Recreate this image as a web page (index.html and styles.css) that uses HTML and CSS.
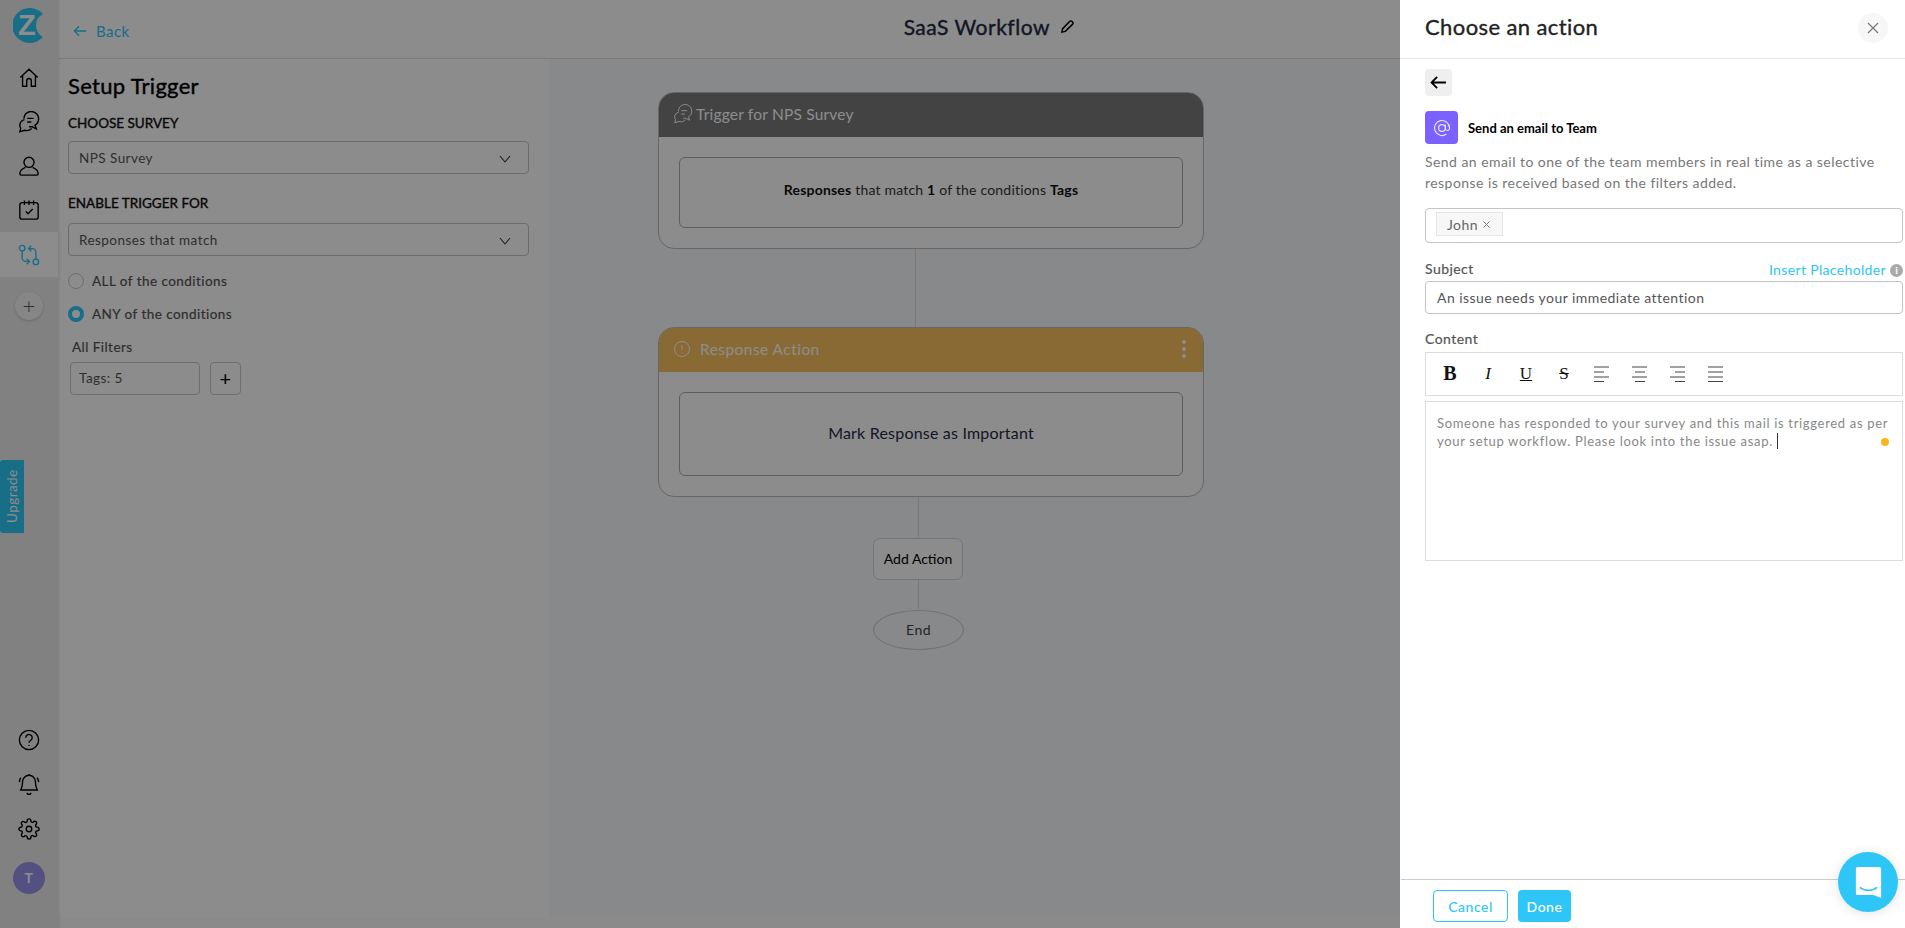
FILE: index.html
```html
<!DOCTYPE html>
<html lang="en">
<head>
  <meta charset="UTF-8">
  <title>SaaS Workflow</title>
  <link rel="stylesheet" href="styles.css">
</head>
<body>
  <div class="app">
    <nav class="sidebar">
      <svg class="logo" viewBox="0 0 32 35" width="32" height="35">
        <path d="M30 6A17.500 17.500 0 1 0 30 29 A13 13 0 0 1 30 6Z" fill="#2dc6f6"/>
        <text x="5" y="27" class="logo-z">Z</text>
      </svg>
      <a class="nav-item"><svg viewBox="0 0 24 24" class="ico"><path d="M2.500 11.500 12 2.500l9.500 9M5 9.500V21h4.500v-6a2.500 2.500 0 0 1 5 0v6H19V9.500"/></svg></a>
      <a class="nav-item"><svg viewBox="0 0 24 24" class="ico"><path d="M6.500 8.500a8 8 0 1 1 12 7l1.500 4-5-2.500a8 8 0 0 1-3 0"/><path d="M10 8h7M10 12h4.500"/><path d="M7 9.500C4 10.500 2 13 2 15.500c0 1.500.5 2.500 1 3.500L2 22.500l5-1.500c3 1 6 0 8-2"/></svg></a>
      <a class="nav-item"><svg viewBox="0 0 24 24" class="ico"><circle cx="12" cy="8" r="5.500"/><path d="M8 13.500C4.500 15 2 18 2 20.500c0 1 .5 1.500 1.500 1.500h17c1 0 1.500-.5 1.500-1.500 0-2.500-2.500-5.500-6-7"/></svg></a>
      <a class="nav-item"><svg viewBox="0 0 24 24" class="ico"><rect x="2" y="4" width="20" height="18" rx="2.500"/><path d="M7 1.500v5M12 1.500v5M17 1.500v5M8.500 13.500l2.500 2.500 5-5"/></svg></a>
      <a class="nav-item active"><svg viewBox="0 0 24 24" class="ico"><circle cx="4.500" cy="4.500" r="3"/><circle cx="19.500" cy="19.500" r="3"/><path d="M4.500 7.500V15a4 4 0 0 0 4 4h3.500M9.500 16l3 3-3 3"/><path d="M19.500 16.500V9a4 4 0 0 0-4-4H12M14.500 2l-3 3 3 3"/></svg></a>
      <button class="nav-add">+</button>
      <div class="nav-bottom">
        <a class="nav-item small"><svg viewBox="0 0 24 24" class="ico"><circle cx="12" cy="12" r="10.500"/><path d="M8.500 9.500a3.500 3.500 0 1 1 5.500 2.800c-1.300.9-2 1.400-2 2.700M12 17.500v1"/></svg></a>
        <a class="nav-item small"><svg viewBox="0 0 24 24" class="ico"><path d="M12 2.500a7 7 0 0 0-7 7c0 5-1 7-2 9h18c-1-2-2-4-2-9a7 7 0 0 0-7-7zM10 21.500a2 2 0 0 0 4 0M12 1v1.500M3 5a12 12 0 0 0-1.500 5M21 5a12 12 0 0 1 1.500 5"/></svg></a>
        <a class="nav-item small"><svg viewBox="0 0 24 24" class="ico"><path d="M12 15a3 3 0 1 0 0-6 3 3 0 0 0 0 6z"/><path d="M19.400 15a1.650 1.650 0 0 0 .33 1.820l.06.06a2 2 0 0 1 0 2.830 2 2 0 0 1-2.830 0l-.06-.06a1.650 1.650 0 0 0-1.820-.33 1.650 1.650 0 0 0-1 1.510V21a2 2 0 0 1-2 2 2 2 0 0 1-2-2v-.09A1.650 1.650 0 0 0 9 19.400a1.650 1.650 0 0 0-1.820.33l-.06.06a2 2 0 0 1-2.830 0 2 2 0 0 1 0-2.830l.06-.06a1.650 1.650 0 0 0 .33-1.820 1.650 1.650 0 0 0-1.510-1H3a2 2 0 0 1-2-2 2 2 0 0 1 2-2h.09A1.650 1.650 0 0 0 4.600 9a1.650 1.650 0 0 0-.33-1.820l-.06-.06a2 2 0 0 1 0-2.830 2 2 0 0 1 2.830 0l.06.06a1.650 1.650 0 0 0 1.820.33H9a1.650 1.650 0 0 0 1-1.510V3a2 2 0 0 1 2-2 2 2 0 0 1 2 2v.09a1.650 1.650 0 0 0 1 1.510 1.650 1.650 0 0 0 1.820-.33l.06-.06a2 2 0 0 1 2.830 0 2 2 0 0 1 0 2.830l-.06.06a1.650 1.650 0 0 0-.33 1.820V9a1.650 1.650 0 0 0 1.510 1H21a2 2 0 0 1 2 2 2 2 0 0 1-2 2h-.09a1.650 1.650 0 0 0-1.510 1z"/></svg></a>
        <div class="avatar">T</div>
      </div>
    </nav>
    <a class="upgrade">Upgrade</a>

    <div class="main">
      <header class="topbar">
        <a class="back-link"><svg viewBox="0 0 16 16" width="14" height="14"><path d="M15 8H1.500M7 2.500 1.500 8 7 13.500"/></svg>Back</a>
        <div class="wf-title">SaaS Workflow
          <svg viewBox="0 0 16 16" width="15" height="15"><path d="M2 14l.8-3.700L10.500 2.500a1.500 1.500 0 0 1 2.200 0l.8.800a1.500 1.500 0 0 1 0 2.200L5.700 13.200z"/></svg>
        </div>
      </header>
      <div class="content">
        <aside class="panel">
          <h2>Setup Trigger</h2>
          <div class="field-label">CHOOSE SURVEY</div>
          <div class="select">NPS Survey<svg viewBox="0 0 12 8" width="12" height="8"><path d="M1 1l5 6 5-6"/></svg></div>
          <div class="field-label second">ENABLE TRIGGER FOR</div>
          <div class="select lower">Responses that match<svg viewBox="0 0 12 8" width="12" height="8"><path d="M1 1l5 6 5-6"/></svg></div>
          <div class="radio-row first"><span class="radio"></span>ALL of the conditions</div>
          <div class="radio-row"><span class="radio on"></span>ANY of the conditions</div>
          <div class="filters-label">All Filters</div>
          <div class="filters">
            <div class="filter-box">Tags: 5</div>
            <div class="filter-add">+</div>
          </div>
        </aside>
        <section class="canvas">
          <div class="card">
            <div class="card-head dark">
              <svg viewBox="0 0 24 24" class="head-ico"><path d="M6.500 8.500a8 8 0 1 1 12 7l1.500 4-5-2.500a8 8 0 0 1-3 0"/><path d="M10 8h7M10 12h4.500"/><path d="M7 9.500C4 10.500 2 13 2 15.500c0 1.500.5 2.500 1 3.500L2 22.500l5-1.500c3 1 6 0 8-2"/></svg>
              Trigger for NPS Survey
            </div>
            <div class="card-inner short"><p><b>Responses</b> that match <b>1</b> of the conditions <b>Tags</b></p></div>
          </div>
          <div class="line tall"></div>
          <div class="card">
            <div class="card-head amber">
              <svg viewBox="0 0 24 24" class="head-ico"><circle cx="12" cy="12" r="10"/><path d="M12 6.500v7M12 16.500v1"/></svg>
              Response Action
              <span class="dots"><i></i><i></i><i></i></span>
            </div>
            <div class="card-inner big">Mark Response as Important</div>
          </div>
          <div class="line mid"></div>
          <div class="add-action">Add Action</div>
          <div class="line low"></div>
          <div class="end">End</div>
        </section>
      </div>
    </div>
  </div>

  <div class="overlay"></div>

  <aside class="drawer">
    <div class="drawer-head">
      <h3>Choose an action</h3>
      <button class="close"><svg viewBox="0 0 12 12" width="12" height="12"><path d="M1 1l10 10M11 1 1 11"/></svg></button>
    </div>
    <div class="drawer-body">
      <button class="back-btn"><svg viewBox="0 0 18 14" width="17" height="13"><path d="M17 7H1.500M7.500 1 1.500 7l6 6"/></svg></button>
      <div class="action-title">
        <span class="action-ico"><svg viewBox="0 0 24 24" width="18" height="18"><circle cx="12" cy="12" r="4.500"/><path d="M16.500 7.500v6a3 3 0 0 0 5.500 0V12a10 10 0 1 0-4 8"/></svg></span>
        Send an email to Team
      </div>
      <p class="action-desc">Send an email to one of the team members in real time as a selective response is received based on the filters added.</p>
      <div class="tag-input"><span class="tag">John <svg viewBox="0 0 8 8" width="7" height="7"><path d="M.5.500l7 7M7.500.500l-7 7"/></svg></span></div>
      <div class="label-row">
        <label>Subject</label>
        <span class="placeholder-link">Insert Placeholder<span class="info">i</span></span>
      </div>
      <div class="text-input">An issue needs your immediate attention</div>
      <label class="content-label">Content</label>
      <div class="toolbar">
        <span class="tb tb-b">B</span>
        <span class="tb tb-i">I</span>
        <span class="tb tb-u">U</span>
        <span class="tb tb-s">S</span>
        <svg class="tb-align" viewBox="0 0 16 16" width="16" height="16"><path d="M0 1h15M0 6h10M0 11h15M0 15.500h10"/></svg>
        <svg class="tb-align" viewBox="0 0 16 16" width="16" height="16"><path d="M0 1h15M3 6h10M0 11h15M3 15.500h10"/></svg>
        <svg class="tb-align" viewBox="0 0 16 16" width="16" height="16"><path d="M0 1h15M5 6h10M0 11h15M5 15.500h10"/></svg>
        <svg class="tb-align" viewBox="0 0 16 16" width="16" height="16"><path d="M0 1h15M0 6h15M0 11h15M0 15.500h15"/></svg>
      </div>
      <div class="editor">
        Someone has responded to your survey and this mail is triggered as per your setup workflow. Please look into the issue asap. <span class="caret"></span>
        <span class="dot"></span>
      </div>
    </div>
    <div class="drawer-foot">
      <button class="btn-cancel">Cancel</button>
      <button class="btn-done">Done</button>
    </div>
  </aside>

  <div class="chat">
    <svg viewBox="0 0 28 34" width="29" height="33"><path d="M3 1h22a2 2 0 0 1 2 2v30l-8-3H3a2 2 0 0 1-2-2V3a2 2 0 0 1 2-2z" fill="#fff"/><path d="M5 22c5 4 13 4 18 0" fill="none" stroke="#2dc6f6" stroke-width="1.500"/></svg>
  </div>
</body>
</html>
```

FILE: styles.css
```css
* { box-sizing: border-box; }
html, body { height: 100%; }
body {
  margin: 0;
  overflow: hidden;
  font-family: Lato, "Liberation Sans", sans-serif;
  font-size: 14px;
  letter-spacing: .45px;
  color: #333;
  background: #fff;
}
svg path, svg circle, svg rect { vector-effect: non-scaling-stroke; }
.app { display: flex; height: 928px; }

/* sidebar */
.sidebar {
  width: 58px;
  flex: none;
  display: flex;
  flex-direction: column;
  align-items: center;
  padding-top: 8px;
  background: #ececec;
  box-shadow: 1px 0 3px rgba(0,0,0,.12);
  z-index: 1;
}
.logo { margin: 0 0 13px 0; }
.logo-z { font: 900 29px "Liberation Sans", sans-serif; fill: #fff; }
.nav-item {
  width: 100%;
  height: 44px;
  display: flex;
  align-items: center;
  justify-content: center;
  color: #000;
}
.nav-item.active { background: #fff; height: 45px; color: #2dc6f6; }
.nav-item.small { height: 44.500px; }
.ico { width: 22px; height: 22px; fill: none; stroke: currentColor; stroke-width: 1.400; }
.nav-add {
  width: 28px;
  height: 28px;
  margin-top: 15px;
  padding: 0;
  border: 0;
  border-radius: 50%;
  background: #f4f4f4;
  box-shadow: 0 1px 3px rgba(0,0,0,.2);
  color: #555;
  font: 300 22px/26px Lato, sans-serif;
}
.nav-bottom {
  margin-top: auto;
  width: 100%;
  padding-bottom: 34px;
  display: flex;
  flex-direction: column;
  align-items: center;
}
.avatar {
  width: 32px;
  height: 32px;
  margin-top: 11px;
  border-radius: 50%;
  background: #9a93ea;
  color: #fff;
  font-weight: 700;
  font-size: 14px;
  text-align: center;
  line-height: 32px;
}
.upgrade {
  position: absolute;
  left: 0;
  top: 460px;
  width: 24px;
  height: 73px;
  z-index: 2;
  display: flex;
  align-items: center;
  justify-content: center;
  border-radius: 0 3px 3px 0;
  background: #2dc6f6;
  color: #fff;
  font-size: 13.500px;
  writing-mode: vertical-rl;
  transform: rotate(180deg);
}

/* main */
.main { flex: 1; display: flex; flex-direction: column; min-width: 0; }
.topbar {
  height: 59px;
  flex: none;
  display: flex;
  align-items: center;
  padding-left: 15px;
  border-bottom: 1px solid #e2e2e2;
  background: #fff;
}
.back-link { display: flex; align-items: center; gap: 9px; color: #2dc6f6; font-size: 15px; margin-top: 4px; }
.back-link svg { fill: none; stroke: currentColor; stroke-width: 1.300; }
.wf-title {
  margin: -5px 0 0 774px;
  display: flex;
  align-items: center;
  gap: 10px;
  font-size: 21px;
  font-weight: 400;
  color: #1f2a44;
  letter-spacing: .5px;
  -webkit-text-stroke: .4px #1f2a44;
}
.wf-title svg { fill: none; stroke: #000; stroke-width: 1.500; }
.content { flex: 1; display: flex; min-height: 0; padding-bottom: 10px; background: #fbfbfb; }
.panel { width: 491px; flex: none; padding: 0 20px 0 10px; background: #fff; }
.panel h2 { margin: 13px 0 0; font-size: 22px; line-height: 28px; font-weight: 400; color: #000; letter-spacing: .3px; -webkit-text-stroke: .4px #000; }
.field-label { margin-top: 14px; font-size: 13.500px; line-height: 18px; font-weight: 400; color: #111; letter-spacing: 0; -webkit-text-stroke: .4px #111; }
.field-label.second { margin-top: 20px; }
.select {
  height: 33px;
  margin-top: 9px;
  padding: 0 17px 0 10px;
  display: flex;
  align-items: center;
  justify-content: space-between;
  border: 1px solid #c4c4c4;
  border-radius: 4px;
  color: #555;
  font-size: 13.500px;
}
.select.lower { margin-top: 11px; }
.select svg { fill: none; stroke: #333; stroke-width: 1.100; margin-top: 3px; }
.radio-row { display: flex; align-items: center; gap: 8px; height: 33px; color: #555; font-size: 13.500px; -webkit-text-stroke: .2px #555; }
.radio-row.first { margin-top: 8px; }
.radio { width: 16px; height: 16px; border: 1px solid #c8c8c8; border-radius: 50%; background: #fff; }
.radio.on { border: 4px solid #2dc6f6; }
.filters-label { margin: 8px 0 0 4px; line-height: 18px; color: #555; font-size: 13.500px; -webkit-text-stroke: .2px #555; }
.filters { display: flex; gap: 10px; margin: 6px 0 0 2px; }
.filter-box {
  width: 130px;
  height: 33px;
  padding-left: 8px;
  line-height: 31px;
  border: 1px solid #c8c8c8;
  border-radius: 4px;
  color: #555;
  font-size: 13.500px;
}
.filter-add {
  width: 31px;
  height: 33px;
  border: 1px solid #c8c8c8;
  border-radius: 4px;
  color: #000;
  font-size: 20px;
  line-height: 31px;
  text-align: center;
}

.canvas {
  flex: 1;
  display: flex;
  flex-direction: column;
  align-items: flex-start;
  padding: 33px 0 0 109px;
  background: #f8f9fc;
}
.card {
  width: 546px;
  border: 1px solid #bbb;
  border-radius: 16px;
  background: #fff;
  overflow: hidden;
}
.card-head {
  height: 44px;
  display: flex;
  align-items: center;
  gap: 5px;
  padding: 0 0 3px 14px;
  font-size: 15.500px;
  color: #fff;
}
.card-head.dark { background: #7a7a7a; letter-spacing: .2px; gap: 3px; }
.card-head.dark .head-ico { width: 20px; height: 20px; }
.card-head.amber { background: #fbc160; gap: 9px; }
.head-ico { width: 18px; height: 18px; fill: none; stroke: currentColor; stroke-width: 1; }
.dots { margin-left: auto; margin-right: 17px; display: flex; flex-direction: column; gap: 3px; }
.dots i { width: 4px; height: 4px; border-radius: 50%; background: #fff; }
.card-inner {
  margin: 20px 20px 20px;
  border: 1px solid #aaa;
  border-radius: 6px;
  display: flex;
  justify-content: center;
  color: #333;
  letter-spacing: .2px;
}
.card-inner.short { height: 71px; padding-top: 23px; }
.card-inner.short p { margin: 0; }
.card-inner b { color: #111; font-weight: 700; }
.card-inner.big { height: 84px; margin-bottom: 20px; align-items: center; font-size: 16px; color: #1f2a44; padding-bottom: 3px; }
.line { width: 1px; background: #dcdcdc; }
.line.tall { height: 78px; margin-left: 257px; }
.line.mid { height: 41px; margin-left: 260px; }
.line.low { height: 30px; margin-left: 260px; }
.add-action {
  width: 90px;
  height: 42px;
  margin-left: 215px;
  border: 1px solid #d6d6d6;
  border-radius: 7px;
  background: #fff;
  color: #000;
  line-height: 40px;
  text-align: center;
  letter-spacing: 0;
}
.end {
  width: 91px;
  height: 40px;
  margin-left: 215px;
  border: 1px solid #cfcfcf;
  border-radius: 50%;
  color: #444;
  line-height: 38px;
  text-align: center;
}

.overlay { position: fixed; inset: 0; background: rgba(0,0,0,.45); z-index: 5; }

/* drawer */
.drawer {
  position: fixed;
  top: 0;
  right: 0;
  bottom: 0;
  width: 505px;
  z-index: 6;
  display: flex;
  flex-direction: column;
  background: #fff;
}
.drawer-head {
  height: 59px;
  flex: none;
  display: flex;
  align-items: center;
  justify-content: space-between;
  padding: 0 17px 0 25px;
  border-bottom: 1px solid #e6e6e6;
}
.drawer-head h3 { margin: -5px 0 0; font-size: 22px; font-weight: 400; color: #222; letter-spacing: .4px; -webkit-text-stroke: .35px #222; }
.close {
  width: 30px;
  height: 30px;
  margin-top: -2px;
  padding: 0;
  border: 0;
  border-radius: 50%;
  background: #f7f7f7;
  display: flex;
  align-items: center;
  justify-content: center;
}
.close svg { fill: none; stroke: #777; stroke-width: 1.200; }
.drawer-body { flex: 1; padding: 10px 2px 0 25px; }
.back-btn {
  width: 27px;
  height: 27px;
  padding: 0;
  border: 0;
  border-radius: 4px;
  background: #efefef;
  display: flex;
  align-items: center;
  justify-content: center;
}
.back-btn svg { fill: none; stroke: #000; stroke-width: 1.800; }
.action-title {
  margin-top: 15px;
  display: flex;
  align-items: center;
  gap: 10px;
  font-weight: 700;
  font-size: 13px;
  color: #000;
  letter-spacing: 0;
}
.action-ico {
  width: 33px;
  height: 33px;
  border-radius: 4px;
  background: #7b61ff;
  display: flex;
  align-items: center;
  justify-content: center;
}
.action-ico svg { fill: none; stroke: #e8e4ff; stroke-width: 1.200; }
.action-desc { margin: 7px 0 0; width: 450px; line-height: 21px; color: #777; }
.tag-input {
  height: 35px;
  margin-top: 15px;
  padding: 3px 10px;
  border: 1px solid #c4c4c4;
  border-radius: 4px;
}
.tag {
  display: inline-flex;
  align-items: center;
  gap: 5px;
  height: 24px;
  padding: 0 12px 0 10px;
  border: 1px solid #e6e6e6;
  background: #f7f7f7;
  color: #666;
}
.tag svg { fill: none; stroke: #777; stroke-width: 1; }
.label-row { margin-top: 15px; display: flex; justify-content: space-between; align-items: center; height: 20px; }
.label-row label, .content-label { font-weight: 400; color: #555; font-size: 14px; -webkit-text-stroke: .2px #555; }
.placeholder-link { display: flex; align-items: center; gap: 4px; color: #2dc6f6; font-size: 14px; padding-top: 2px; letter-spacing: .35px; }
.info {
  width: 13px;
  height: 13px;
  margin-top: 3px;
  border-radius: 50%;
  background: #aaa;
  color: #fff;
  font-size: 10px;
  font-weight: 700;
  line-height: 13px;
  text-align: center;
  letter-spacing: 0;
}
.text-input {
  height: 33px;
  margin-top: 3px;
  padding-left: 11px;
  border: 1px solid #c4c4c4;
  border-radius: 4px;
  line-height: 31px;
  color: #555;
  letter-spacing: .45px;
}
.content-label { display: block; margin-top: 16px; line-height: 18px; }
.toolbar {
  height: 44px;
  margin-top: 4px;
  padding: 0 0 1px 16px;
  display: flex;
  align-items: center;
  gap: 22px;
  border: 1px solid #ddd;
}
.tb { width: 16px; text-align: center; font-family: "Liberation Serif", serif; font-size: 17px; color: #111; letter-spacing: 0; }
.tb-b { font-weight: 700; font-size: 20px; }
.tb-i { font-style: italic; }
.tb-u { text-decoration: underline; }
.tb-s { text-decoration: line-through; }
.tb-align { fill: none; stroke: #444; stroke-width: 1; margin-top: 1px; }
.editor {
  position: relative;
  height: 160px;
  margin-top: 5px;
  padding: 12px 11px;
  border: 1px solid #ddd;
  line-height: 18px;
  color: #888;
  font-size: 13px;
  letter-spacing: .68px;
}
.caret { display: inline-block; width: 1px; height: 16px; background: #333; vertical-align: -3px; }
.dot { position: absolute; right: 13px; top: 36px; width: 8px; height: 8px; border-radius: 50%; background: #fbb41c; }
.drawer-foot {
  height: 49px;
  flex: none;
  margin-left: 1px;
  padding: 10px 0 0 32px;
  display: flex;
  gap: 10px;
  border-top: 1px solid #ccc;
}
.drawer-foot button { height: 32px; border-radius: 4px; font: 500 14px Lato, sans-serif; letter-spacing: .5px; padding: 0; }
.btn-cancel { width: 75px; background: #fff; border: 1px solid #2dc6f6; color: #2dc6f6; }
.btn-done { width: 53px; background: #2dc6f6; border: 0; color: #fff; }
.chat {
  position: fixed;
  right: 7px;
  bottom: 16px;
  width: 60px;
  height: 60px;
  z-index: 7;
  border-radius: 50%;
  background: #2dc6f6;
  box-shadow: 0 1px 12px rgba(0,0,0,.12);
  display: flex;
  align-items: center;
  justify-content: center;
}
```
